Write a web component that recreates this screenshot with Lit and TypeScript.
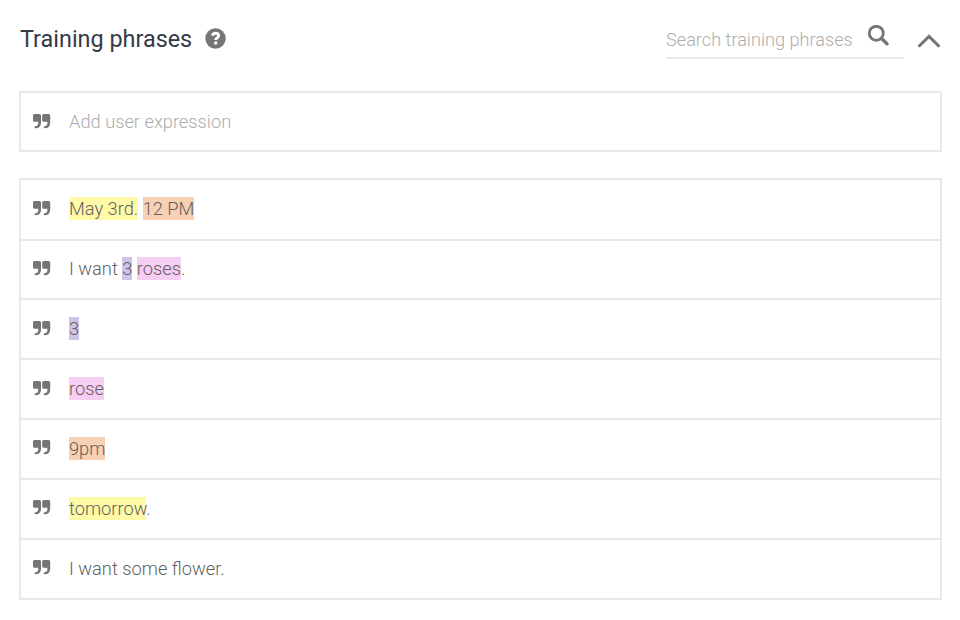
import { LitElement, html, css, svg } from "lit";
import { customElement } from "lit/decorators.js";

type Part = string | [string, string];

const PHRASES: Part[][] = [
  [["May 3rd.", "date"], " ", ["12 PM", "time"]],
  ["I want ", ["3", "number"], " ", ["roses", "flower"], "."],
  [["3", "number"]],
  [["rose", "flower"]],
  [["9pm", "time"]],
  [["tomorrow", "date"], "."],
  ["I want some flower."],
];

const quote = svg`<path d="M1.500 0H6.500Q8 0 8 1.500V8.500Q8 14.300 2.500 14.300Q1.500 14.300 1.500 13.300T2.500 12.200Q5.200 12 5.200 9V7.800H1.500Q0 7.800 0 6.300V1.500Q0 0 1.500 0Z"/>`;

@customElement("app-root")
export class AppRoot extends LitElement {
  static styles = css`
    :host { display: block; height: 620px; background: #fff; color: #616161; font: 300 18.25px/24px Roboto, sans-serif; box-sizing: border-box; padding: 0 18px 0 19px; overflow: hidden; }
    * { box-sizing: border-box; }
    svg { display: block; fill: #757575; flex: none; }
    header { display: flex; height: 91px; }
    h1 { margin: 24px 0 0 1px; font: 400 23.4px/30px Roboto, sans-serif; color: #343a48; white-space: nowrap; }
    .help { margin: 28px 0 0 13px; }
    .search { display: flex; margin-left: auto; width: 238px; height: 59px; border-bottom: 2px solid #e8e8e8; color: #adadad; font-size: 18.15px; white-space: nowrap; }
    .search span { padding-top: 28px; width: 202px; }
    .search svg { margin-top: 25px; }
    .chev { margin: 34px 2px 0 14px; }
    .box { border: 2px solid #e8e8e8; }
    .row { display: flex; align-items: center; height: 59.85px; padding-left: 12px; white-space: pre; }
    .add { height: 61px; margin-bottom: 26px; color: #adadad; }
    .add .row { height: 57px; }
    .row + .row { border-top: 2px solid #e8e8e8; }
    .row:first-child { height: 58.500px; }
    .row svg { margin: -2px 18.5px 0 0; }
    .date, .time, .number, .flower { padding: 1px 0; }
    .date { background: #fffaa8; }
    .time { background: #f8d0b3; }
    .number { background: #cfc4e8; }
    .flower { background: #f6cdf3; }
  `;

  icon() {
    return html`<svg width="17.500" height="15" viewBox="0 0 17.500 15">${quote}<g transform="translate(9.200 0)">${quote}</g></svg>`;
  }

  render() {
    return html`
      <header>
        <h1>Training phrases</h1>
        <svg class="help" width="21" height="21" viewBox="0 0 21 21"><circle cx="10.500" cy="10.500" r="10.200"/><path d="M7.300 7.600Q8.300 5.300 10.700 5.300Q13.600 5.300 13.600 7.800C13.600 10 10.700 9.900 10.700 12.100" fill="none" stroke="#fff" stroke-width="2.900"/><rect x="9.200" y="13.500" width="3" height="2.900" rx=".4" fill="#fff"/></svg>
        <div class="search"><span>Search training phrases</span><svg width="22" height="22" viewBox="0 0 22 22"><circle cx="8.300" cy="8.300" r="7" fill="none" stroke="#757575" stroke-width="2.800"/><path d="M13.500 13.500l5.500 5.300" fill="none" stroke="#757575" stroke-width="3.400" stroke-linecap="round"/></svg></div>
        <svg class="chev" width="22" height="14" viewBox="0 0 22 14"><path d="M1.500 11.700L11 2.400l9.500 9.300" fill="none" stroke="#757575" stroke-width="3" stroke-linecap="round"/></svg>
      </header>
      <div class="box add"><div class="row">${this.icon()}<span>Add user expression</span></div></div>
      <div class="box">
        ${PHRASES.map((p) => html`<div class="row">${this.icon()}<span>${p.map((x) => typeof x === "string" ? x : html`<span class=${x[1]}>${x[0]}</span>`)}</span></div>`)}
      </div>`;
  }
}
